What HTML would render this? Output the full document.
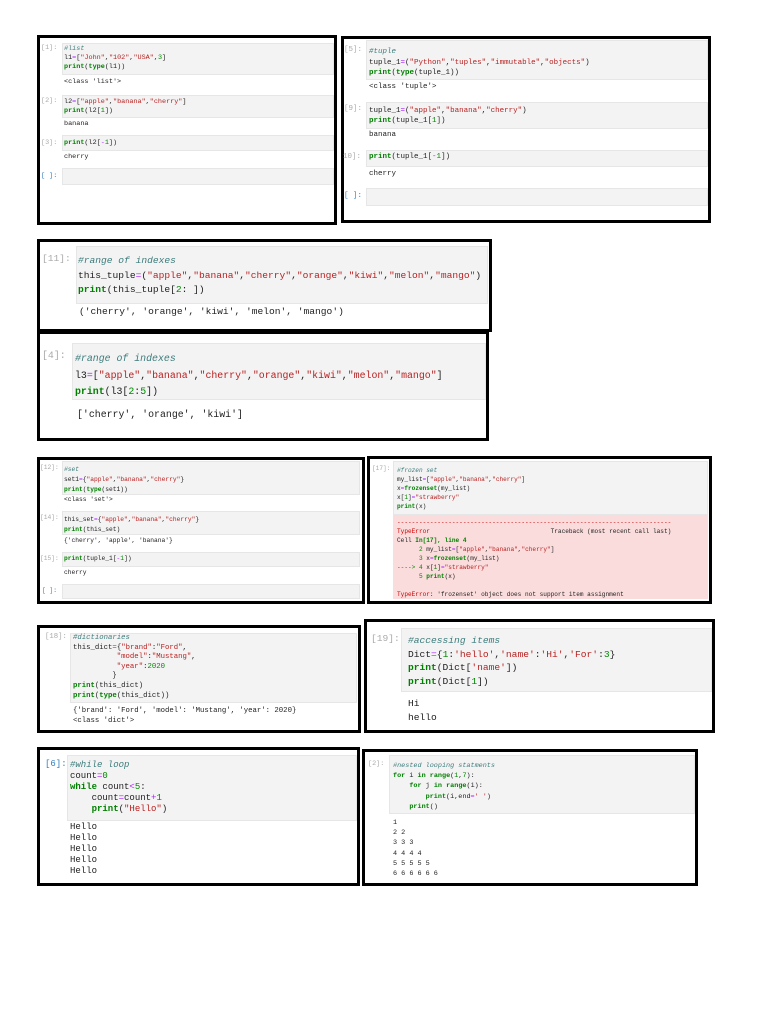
<!DOCTYPE html>
<html><head><meta charset="utf-8"><style>
body{margin:0;width:768px;height:1024px;background:#fff;position:relative;overflow:hidden;font-family:"Liberation Mono",monospace;}
.b{position:absolute;border:3px solid #000;box-sizing:border-box;}
.g{position:absolute;background:#f3f3f3;border:1px solid #e6e6e6;box-sizing:border-box;}
.r{position:absolute;background:#fbdcdc;}
.t{position:absolute;white-space:pre;line-height:1;color:#222;}
.k{color:#008000;font-weight:bold}
.s{color:#ba2121}
.c{color:#3d7b7b;font-style:italic}
.n{color:#080}
.o{color:#aa22ff}
.p{color:#aaa}
.q{color:#307fc1}
.e{color:#c00}
</style></head><body>

<!-- Box 1 -->
<div class="b" style="left:37px;top:35px;width:300px;height:190px"></div>
<div class="g" style="left:62px;top:43px;width:272px;height:32px"></div>
<div class="t p" style="left:41px;top:45px;font-size:6.8px">[1]:</div>
<div class="t" style="left:64px;top:45px;font-size:6.8px;line-height:9px"><span class="c">#list</span>
l1<span class="o">=</span>[<span class="s">"John"</span>,<span class="s">"102"</span>,<span class="s">"USA"</span>,<span class="n">3</span>]
<span class="k">print</span>(<span class="k">type</span>(l1))</div>
<div class="t" style="left:64px;top:79px;font-size:6.8px">&lt;class 'list'&gt;</div>
<div class="g" style="left:62px;top:95px;width:272px;height:23px"></div>
<div class="t p" style="left:41px;top:98px;font-size:6.8px">[2]:</div>
<div class="t" style="left:64px;top:98px;font-size:6.8px;line-height:9px">l2<span class="o">=</span>[<span class="s">"apple"</span>,<span class="s">"banana"</span>,<span class="s">"cherry"</span>]
<span class="k">print</span>(l2[<span class="n">1</span>])</div>
<div class="t" style="left:64px;top:121px;font-size:6.8px">banana</div>
<div class="g" style="left:62px;top:135px;width:272px;height:16px"></div>
<div class="t p" style="left:41px;top:140px;font-size:6.8px">[3]:</div>
<div class="t" style="left:64px;top:140px;font-size:6.8px"><span class="k">print</span>(l2[<span class="o">-</span><span class="n">1</span>])</div>
<div class="t" style="left:64px;top:154px;font-size:6.8px">cherry</div>
<div class="g" style="left:62px;top:168px;width:272px;height:17px"></div>
<div class="t q" style="left:41px;top:173px;font-size:6.8px">[ ]:</div>

<!-- Box 2 -->
<div class="b" style="left:341px;top:36px;width:370px;height:187px"></div>
<div class="g" style="left:366px;top:40px;width:342px;height:40px"></div>
<div class="t p" style="left:344px;top:47px;font-size:7.5px">[5]:</div>
<div class="t" style="left:369px;top:47px;font-size:7.5px;line-height:10.5px"><span class="c">#tuple</span>
tuple_1<span class="o">=</span>(<span class="s">"Python"</span>,<span class="s">"tuples"</span>,<span class="s">"immutable"</span>,<span class="s">"objects"</span>)
<span class="k">print</span>(<span class="k">type</span>(tuple_1))</div>
<div class="t" style="left:369px;top:84px;font-size:7.5px">&lt;class 'tuple'&gt;</div>
<div class="g" style="left:366px;top:102px;width:342px;height:27px"></div>
<div class="t p" style="left:344px;top:106px;font-size:7.5px">[9]:</div>
<div class="t" style="left:369px;top:106px;font-size:7.5px;line-height:10px">tuple_1<span class="o">=</span>(<span class="s">"apple"</span>,<span class="s">"banana"</span>,<span class="s">"cherry"</span>)
<span class="k">print</span>(tuple_1[<span class="n">1</span>])</div>
<div class="t" style="left:369px;top:132px;font-size:7.5px">banana</div>
<div class="g" style="left:366px;top:150px;width:342px;height:17px"></div>
<div class="t p" style="left:343px;top:154px;font-size:7.5px">10]:</div>
<div class="t" style="left:369px;top:154px;font-size:7.5px"><span class="k">print</span>(tuple_1[<span class="o">-</span><span class="n">1</span>])</div>
<div class="t" style="left:369px;top:171px;font-size:7.5px">cherry</div>
<div class="g" style="left:366px;top:188px;width:342px;height:18px"></div>
<div class="t q" style="left:344px;top:193px;font-size:7.5px">[ ]:</div>

<!-- Box 3 -->
<div class="b" style="left:37px;top:239px;width:455px;height:93px"></div>
<div class="g" style="left:76px;top:246px;width:412px;height:58px"></div>
<div class="t p" style="left:42px;top:254px;font-size:9.6px">[11]:</div>
<div class="t" style="left:78px;top:254px;font-size:9.6px;line-height:14.5px"><span class="c">#range of indexes</span>
this_tuple<span class="o">=</span>(<span class="s">"apple"</span>,<span class="s">"banana"</span>,<span class="s">"cherry"</span>,<span class="s">"orange"</span>,<span class="s">"kiwi"</span>,<span class="s">"melon"</span>,<span class="s">"mango"</span>)
<span class="k">print</span>(this_tuple[<span class="n">2</span>: ])</div>
<div class="t" style="left:79px;top:307px;font-size:9.6px">('cherry', 'orange', 'kiwi', 'melon', 'mango')</div>

<!-- Box 4 -->
<div class="b" style="left:37px;top:331px;width:452px;height:110px"></div>
<div class="g" style="left:72px;top:343px;width:414px;height:57px"></div>
<div class="t p" style="left:42px;top:351px;font-size:9.9px">[4]:</div>
<div class="t" style="left:75px;top:351px;font-size:9.9px;line-height:16.5px"><span class="c">#range of indexes</span>
l3<span class="o">=</span>[<span class="s">"apple"</span>,<span class="s">"banana"</span>,<span class="s">"cherry"</span>,<span class="s">"orange"</span>,<span class="s">"kiwi"</span>,<span class="s">"melon"</span>,<span class="s">"mango"</span>]
<span class="k">print</span>(l3[<span class="n">2</span>:<span class="n">5</span>])</div>
<div class="t" style="left:77px;top:410px;font-size:9.9px">['cherry', 'orange', 'kiwi']</div>

<!-- Box 5 -->
<div class="b" style="left:37px;top:457px;width:328px;height:147px"></div>
<div class="g" style="left:62px;top:461px;width:298px;height:34px"></div>
<div class="t p" style="left:40px;top:465px;font-size:6.25px">[12]:</div>
<div class="t" style="left:64px;top:465px;font-size:6.25px;line-height:10px"><span class="c">#set</span>
set1<span class="o">=</span>{<span class="s">"apple"</span>,<span class="s">"banana"</span>,<span class="s">"cherry"</span>}
<span class="k">print</span>(<span class="k">type</span>(set1))</div>
<div class="t" style="left:64px;top:497px;font-size:6.25px">&lt;class 'set'&gt;</div>
<div class="g" style="left:62px;top:511px;width:298px;height:24px"></div>
<div class="t p" style="left:40px;top:515px;font-size:6.25px">[14]:</div>
<div class="t" style="left:64px;top:515px;font-size:6.25px;line-height:10px">this_set<span class="o">=</span>{<span class="s">"apple"</span>,<span class="s">"banana"</span>,<span class="s">"cherry"</span>}
<span class="k">print</span>(this_set)</div>
<div class="t" style="left:64px;top:538px;font-size:6.25px">{'cherry', 'apple', 'banana'}</div>
<div class="g" style="left:62px;top:552px;width:298px;height:15px"></div>
<div class="t p" style="left:40px;top:556px;font-size:6.25px">[15]:</div>
<div class="t" style="left:64px;top:556px;font-size:6.25px"><span class="k">print</span>(tuple_1[<span class="o">-</span><span class="n">1</span>])</div>
<div class="t" style="left:64px;top:570px;font-size:6.25px">cherry</div>
<div class="g" style="left:62px;top:584px;width:298px;height:15px"></div>
<div class="t q" style="left:42px;top:588px;font-size:6.25px">[ ]:</div>

<!-- Box 6 -->
<div class="b" style="left:367px;top:456px;width:345px;height:148px"></div>
<div class="g" style="left:393px;top:461px;width:315px;height:54px"></div>
<div class="t p" style="left:372px;top:466px;font-size:6.1px">[17]:</div>
<div class="t" style="left:397px;top:466px;font-size:6.1px;line-height:9px"><span class="c">#frozen set</span>
my_list<span class="o">=</span>[<span class="s">"apple"</span>,<span class="s">"banana"</span>,<span class="s">"cherry"</span>]
x<span class="o">=</span><span class="k">frozenset</span>(my_list)
x[<span class="n">1</span>]<span class="o">=</span><span class="s">"strawberry"</span>
<span class="k">print</span>(x)</div>
<div class="r" style="left:393px;top:515px;width:315px;height:84px"></div>
<div class="t" style="left:397px;top:518px;font-size:6.1px;line-height:9px"><span class="e">---------------------------------------------------------------------------</span>
<span class="e">TypeError</span>                                 Traceback (most recent call last)
Cell <span class="k">In[17], line 4</span>
<span class="n">      2</span> my_list<span class="o">=</span>[<span class="s">"apple"</span>,<span class="s">"banana"</span>,<span class="s">"cherry"</span>]
<span class="n">      3</span> x<span class="o">=</span><span class="k">frozenset</span>(my_list)
<span class="n">----&gt; 4</span> x[<span class="n">1</span>]<span class="o">=</span><span class="s">"strawberry"</span>
<span class="n">      5</span> <span class="k">print</span>(x)

<span class="e">TypeError</span>: 'frozenset' object does not support item assignment</div>

<!-- Box 7 -->
<div class="b" style="left:37px;top:625px;width:324px;height:108px"></div>
<div class="g" style="left:70px;top:633px;width:287px;height:70px"></div>
<div class="t p" style="left:45px;top:634px;font-size:7.3px">[18]:</div>
<div class="t" style="left:73px;top:634px;font-size:7.3px;line-height:9.6px"><span class="c">#dictionaries</span>
this_dict<span class="o">=</span>{<span class="s">"brand"</span>:<span class="s">"Ford"</span>,
          <span class="s">"model"</span>:<span class="s">"Mustang"</span>,
          <span class="s">"year"</span>:<span class="n">2020</span>
         }
<span class="k">print</span>(this_dict)
<span class="k">print</span>(<span class="k">type</span>(this_dict))</div>
<div class="t" style="left:73px;top:707px;font-size:7.3px;line-height:9.6px">{'brand': 'Ford', 'model': 'Mustang', 'year': 2020}
&lt;class 'dict'&gt;</div>

<!-- Box 8 -->
<div class="b" style="left:364px;top:619px;width:351px;height:114px"></div>
<div class="g" style="left:401px;top:628px;width:311px;height:64px"></div>
<div class="t p" style="left:371px;top:634px;font-size:9.6px">[19]:</div>
<div class="t" style="left:408px;top:634px;font-size:9.6px;line-height:13.6px"><span class="c">#accessing items</span>
Dict<span class="o">=</span>{<span class="n">1</span>:<span class="s">'hello'</span>,<span class="s">'name'</span>:<span class="s">'Hi'</span>,<span class="s">'For'</span>:<span class="n">3</span>}
<span class="k">print</span>(Dict[<span class="s">'name'</span>])
<span class="k">print</span>(Dict[<span class="n">1</span>])</div>
<div class="t" style="left:408px;top:697px;font-size:9.6px;line-height:13.6px">Hi
hello</div>

<!-- Box 9 -->
<div class="b" style="left:37px;top:747px;width:323px;height:139px"></div>
<div class="g" style="left:67px;top:755px;width:290px;height:66px"></div>
<div class="t q" style="left:45px;top:760px;font-size:9px">[6]:</div>
<div class="t" style="left:70px;top:760px;font-size:9px;line-height:11px"><span class="c">#while loop</span>
count<span class="o">=</span><span class="n">0</span>
<span class="k">while</span> count<span class="o">&lt;</span><span class="n">5</span>:
    count<span class="o">=</span>count<span class="o">+</span><span class="n">1</span>
    <span class="k">print</span>(<span class="s">"Hello"</span>)</div>
<div class="t" style="left:70px;top:822px;font-size:9px;line-height:11px">Hello
Hello
Hello
Hello
Hello</div>

<!-- Box 10 -->
<div class="b" style="left:362px;top:749px;width:336px;height:137px"></div>
<div class="g" style="left:389px;top:755px;width:306px;height:59px"></div>
<div class="t p" style="left:368px;top:761px;font-size:6.8px">[2]:</div>
<div class="t" style="left:393px;top:761px;font-size:6.8px;line-height:10.2px"><span class="c">#nested looping statments</span>
<span class="k">for</span> i <span class="k">in</span> <span class="k">range</span>(<span class="n">1</span>,<span class="n">7</span>):
    <span class="k">for</span> j <span class="k">in</span> <span class="k">range</span>(i):
        <span class="k">print</span>(i,end<span class="o">=</span><span class="s">' '</span>)
    <span class="k">print</span>()</div>
<div class="t" style="left:393px;top:818px;font-size:6.8px;line-height:10.2px">1 
2 2 
3 3 3 
4 4 4 4 
5 5 5 5 5 
6 6 6 6 6 6 </div>

</body></html>
